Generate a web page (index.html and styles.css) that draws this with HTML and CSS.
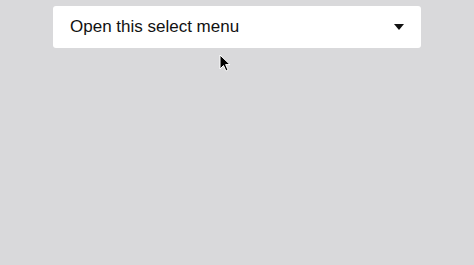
FILE: index.html
```html
<!DOCTYPE html>
<html>
<head>
<meta charset="utf-8">
<link rel="stylesheet" href="styles.css">
</head>
<body>
<div class="page">
  <div class="select">
    <span class="label">Open this select menu</span>
    <svg class="caret" width="10" height="6" viewBox="0 0 10 6"><path d="M0 0H10L5 6Z" fill="#111"/></svg>
  </div>
</div>
<svg class="cursor" width="12" height="18" viewBox="0 0 12 18">
  <path d="M1 1V15L4.5 11.5L7 17L9 16L6.6 10.6H11Z" fill="#000" stroke="#fff" stroke-width="1"/>
</svg>
</body>
</html>
```
FILE: styles.css
```css
html, body {
  margin: 0;
  padding: 0;
  background: #d9d9db;
  width: 474px;
  height: 265px;
  overflow: hidden;
  font-family: "Liberation Sans", Arial, sans-serif;
}
.page {
  padding: 6px 0 0 53px;
}
.select {
  box-sizing: border-box;
  width: 368px;
  height: 42px;
  background: #fff;
  border-radius: 3px;
  display: flex;
  align-items: center;
  justify-content: space-between;
  padding: 0 17px 0 17px;
}
.label {
  font-size: 17px;
  color: #111;
}
.caret {
  display: block;
}
.cursor {
  position: absolute;
  left: 219px;
  top: 54px;
}
```
